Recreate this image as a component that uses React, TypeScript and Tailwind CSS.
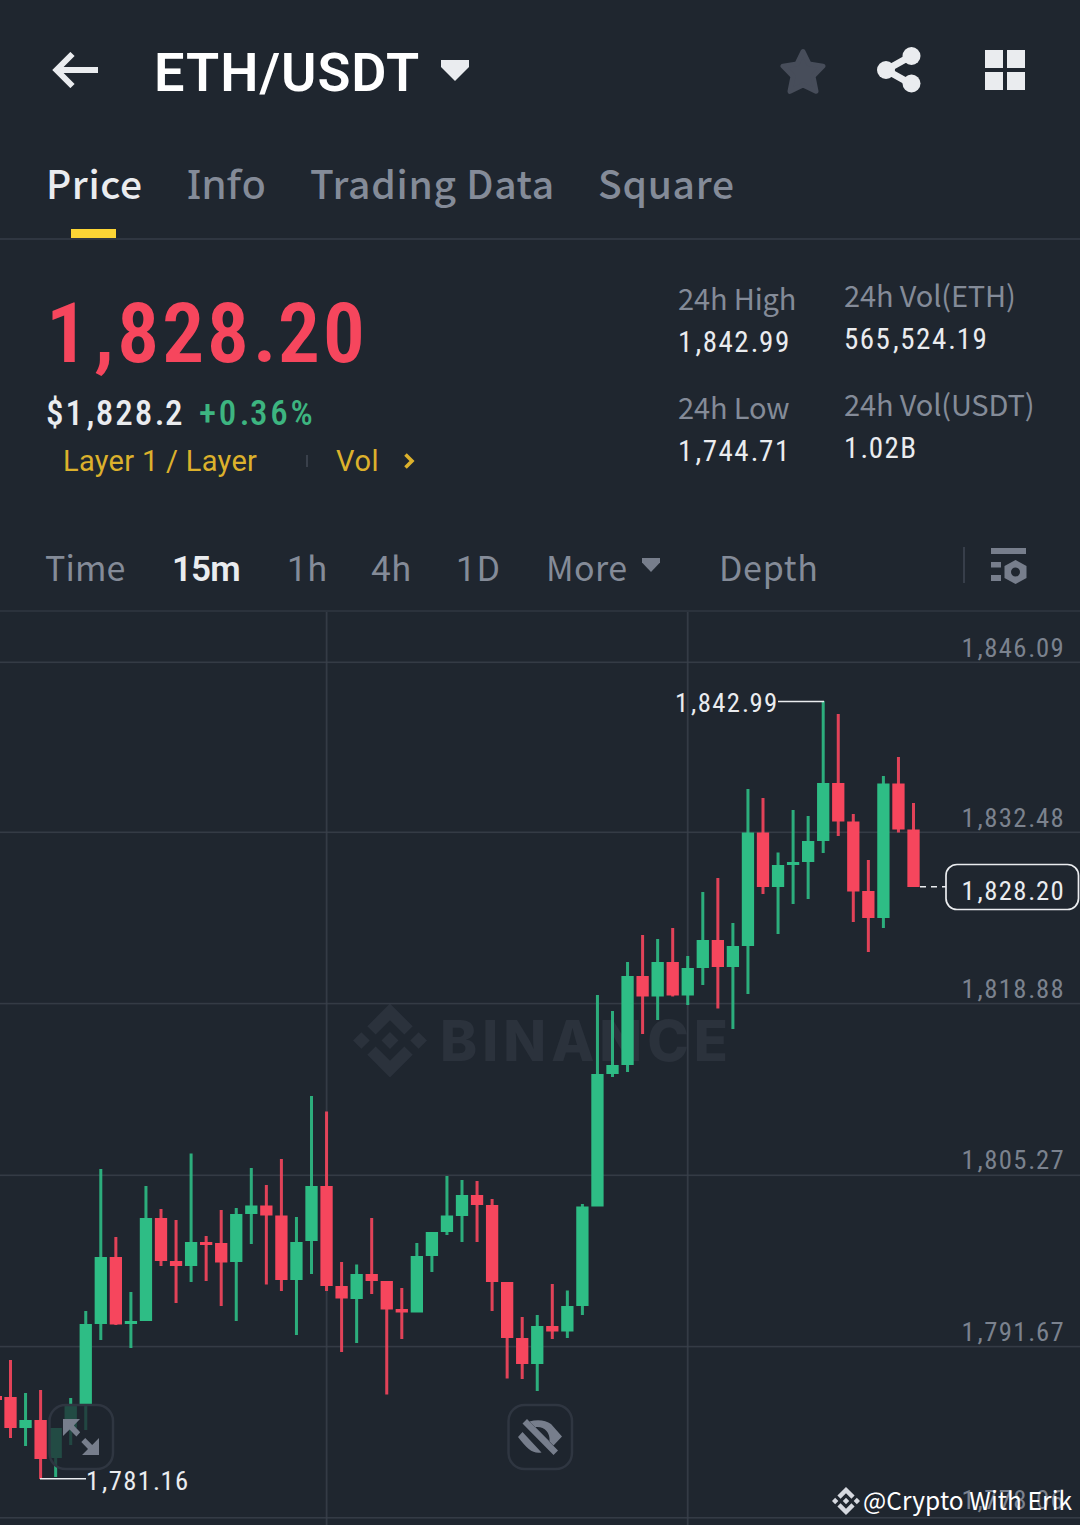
import type { ReactNode } from "react";

const UP = "#2ebd85";
const DOWN = "#f6465d";
const BG = "#1f262f";

/* [bodyTop, bodyBottom, wickTop, wickBottom, rising] in chart pixels */
type Candle = [number, number, number, number, 0 | 1];
const candles: Candle[] = [
  [1397, 1428, 1360, 1438, 0],
  [1420, 1428, 1393, 1446, 1],
  [1420, 1459, 1390, 1479, 0],
  [1428, 1458, 1428, 1477, 1],
  [1405, 1428, 1398, 1445, 1],
  [1324, 1404, 1311, 1430, 1],
  [1257, 1324, 1169, 1340, 1],
  [1257, 1324.5, 1237, 1325, 0],
  [1321, 1324, 1292, 1348, 1],
  [1218, 1321, 1186, 1321, 1],
  [1218, 1261, 1209, 1266, 0],
  [1261, 1266, 1220, 1303, 0],
  [1242, 1266, 1153.5, 1282, 1],
  [1242, 1245, 1236, 1281, 0],
  [1243, 1262.5, 1210, 1306, 0],
  [1214, 1262, 1208, 1321, 1],
  [1205.5, 1214, 1168, 1244, 1],
  [1205.5, 1215.5, 1185, 1284.5, 0],
  [1215.5, 1280, 1159, 1291, 0],
  [1242, 1280, 1217, 1335, 1],
  [1186, 1241, 1096, 1274, 1],
  [1186, 1286, 1111.5, 1291, 0],
  [1286, 1298.5, 1262, 1352, 0],
  [1274, 1299, 1264.5, 1343, 1],
  [1274, 1281, 1218, 1294, 0],
  [1281, 1309.5, 1281, 1394.5, 0],
  [1309, 1312.5, 1288, 1339, 0],
  [1256, 1312.5, 1243, 1312, 1],
  [1232, 1256, 1232, 1272, 1],
  [1215.5, 1232, 1176, 1235, 1],
  [1195, 1216, 1180, 1242, 1],
  [1195, 1205, 1181, 1242, 0],
  [1205, 1282, 1199, 1311, 0],
  [1282, 1338, 1282, 1378.5, 0],
  [1338, 1364, 1317, 1379, 0],
  [1326, 1364, 1315, 1391, 1],
  [1326, 1331.5, 1284, 1339, 0],
  [1306, 1331.5, 1290.5, 1338, 1],
  [1206.5, 1306, 1204, 1315, 1],
  [1074, 1206.5, 995, 1206, 1],
  [1065, 1074, 1011, 1077, 1],
  [976, 1065, 962, 1072, 1],
  [976, 996.5, 935, 1034, 0],
  [962, 996.5, 939, 1020, 1],
  [962, 995.5, 928, 996.5, 0],
  [968, 995.5, 956, 1005, 1],
  [940, 968, 892, 985, 1],
  [940, 967, 878, 1008.5, 0],
  [946, 967, 923, 1029, 1],
  [832.5, 946, 789, 994, 1],
  [832.5, 887, 798, 894, 0],
  [865, 887, 852.5, 934, 1],
  [862, 865, 810, 904, 1],
  [841, 862, 816, 899, 1],
  [783, 841, 701, 853, 1],
  [783, 821.5, 714, 836, 0],
  [821.5, 891.5, 814, 922, 0],
  [891, 918, 860, 952, 0],
  [783.5, 918, 776, 928, 1],
  [783.5, 829.5, 757, 832.5, 0],
  [829.5, 887, 803, 887, 0],
];

/* Number set in narrow figures with wide separators */
function Num({ value, className = "" }: { value: string; className?: string }) {
  return (
    <span className={`whitespace-nowrap font-['Roboto_Condensed','Roboto',sans-serif] tracking-[0.05em] ${className}`}>
      {value.split("").map((c, i) =>
        c === "," || c === "." ? (
          <span key={i} className="inline-block w-[0.31em] text-center tracking-normal">
            {c}
          </span>
        ) : (
          c
        ),
      )}
    </span>
  );
}

function BinanceMark({ x, y, size, fill }: { x: number; y: number; size: number; fill: string }) {
  return (
    <svg x={x} y={y} width={size} height={size} viewBox="0 0 126.61 126.61" fill={fill}>
      <path d="M38.73 53.2 63.3 28.63 87.89 53.22 102.19 38.92 63.3 0 24.43 38.9ZM0 63.31 14.3 49.01 28.6 63.31 14.3 77.61ZM38.73 73.41 63.3 98 87.89 73.39 102.2 87.68 63.3 126.61 24.41 87.72ZM98 63.31l14.3-14.3 14.3 14.3-14.3 14.3ZM77.83 63.3 63.3 48.78 48.78 63.3 63.3 77.83Z" />
    </svg>
  );
}

function Header() {
  return (
    <header className="flex h-[142px] items-center pb-0.5">
      <svg className="ml-[52px] h-9 w-[46px] shrink-0" viewBox="0 0 46 36" fill="none" stroke="#eaecef" strokeWidth="6">
        <path d="M20.5 2 4.5 18l16 16M5 18h41" />
      </svg>
      <h1 className="ml-[56px] mt-[5px] w-[287px] whitespace-nowrap font-['Roboto',sans-serif] text-[54px] font-semibold leading-none tracking-[1px] text-white">
        ETH/USDT
      </h1>
      <svg className="h-[21px] w-7 shrink-0" viewBox="0 0 28 21" fill="#eaecef">
        <path d="M0 0h28v7L14 21 0 7Z" />
      </svg>
      <svg className="ml-[311px] mt-px h-[46px] w-[46px] shrink-0" viewBox="0 0 46 46" fill="#474d5a" stroke="#474d5a" strokeWidth="5" strokeLinejoin="round">
        <path d="m23 3.5 6 12.4 14 2.2-10 10.2 3 15L23 37 10 43.300l3-15L3 18.100l14-2.200Z" />
      </svg>
      <svg className="ml-[51px] h-[46px] w-11 shrink-0" viewBox="0 0 44 46" fill="#eaecef">
        <path d="M9 23 35 8.500M9 23l26 14.500" stroke="#eaecef" strokeWidth="7" />
        <circle cx="9" cy="23" r="9" />
        <circle cx="34.500" cy="9" r="9" />
        <circle cx="34.500" cy="36.500" r="9" />
      </svg>
      <div className="ml-[64px] grid h-10 w-10 shrink-0 grid-cols-2 gap-1">
        <i className="bg-[#eaecef]" />
        <i className="bg-[#eaecef]" />
        <i className="bg-[#eaecef]" />
        <i className="bg-[#eaecef]" />
      </div>
    </header>
  );
}

function Tabs() {
  return (
    <nav className="flex h-[98px] items-baseline border-b-2 border-[#2f3641] pl-[46px] font-['Noto_Sans_CJK_SC',sans-serif] text-[39px] font-medium leading-[80px] text-[#848b98]">
      <a className="relative w-[141px] tracking-[0.6px] text-[#eaecef]">
        Price
        <i className="absolute left-[25px] top-[87px] h-[9px] w-[45px] bg-[#fcd535]" />
      </a>
      <a className="w-[123px] font-['Noto_Sans',sans-serif] text-[40px] tracking-[0.3px]">Info</a>
      <a className="w-[288px] whitespace-nowrap tracking-[0.7px]">Trading Data</a>
      <a className="tracking-[0.7px]">Square</a>
    </nav>
  );
}

function Stat({ label, children, className = "" }: { label: string; children: ReactNode; className?: string }) {
  return (
    <div className={`leading-9 ${className}`}>
      <div className="whitespace-nowrap font-['Noto_Sans_CJK_SC',sans-serif] text-[29px] tracking-[-0.15px] text-[#848b98]">{label}</div>
      <div className="mt-2 text-[29px] text-[#eaecef]">{children}</div>
    </div>
  );
}

function Summary() {
  return (
    <section className="flex h-[280px]">
      <div className="w-[678px] pl-[46px] pt-[52px]">
        <Num value="1,828.20" className="block text-[84px] font-semibold leading-[84px] tracking-[0.032em]! text-[#f6465d]" />
        <div className="mt-[18px] flex text-[35px] font-medium leading-10">
          <Num value="$1,828.2" className="w-[153px] tracking-[0.056em]! text-[#eaecef]" />
          <Num value="+0.36%" className="tracking-[0.08em]! text-[#3db580]" />
        </div>
        <div className="mt-[7px] flex items-center font-['Roboto',sans-serif] text-[29px] leading-10 text-[#dcb12c]">
          <span className="ml-[17px] w-[243px] whitespace-nowrap tracking-[0.3px]">Layer 1 / Layer</span>
          <i className="h-3 w-[2px] bg-[#39404b]" />
          <span className="ml-[28px] tracking-[0.6px]">Vol</span>
          <svg className="ml-[25px] h-4 w-[11px]" viewBox="0 0 11 16" fill="none" stroke="#dcb12c" strokeWidth="3.600">
            <path d="m1.500 1.500 6.500 6.500-6.500 6.500" />
          </svg>
        </div>
      </div>
      <div className="w-[166px] pt-[39px]">
        <Stat label="24h High">
          <Num value="1,842.99" />
        </Stat>
        <Stat label="24h Low" className="mt-7">
          <Num value="1,744.71" />
        </Stat>
      </div>
      <div className="pt-9">
        <Stat label="24h Vol(ETH)">
          <Num value="565,524.19" />
        </Stat>
        <Stat label="24h Vol(USDT)" className="mt-7">
          <Num value="1.02B" />
        </Stat>
      </div>
    </section>
  );
}

function Intervals() {
  return (
    <div className="flex h-[92px] items-baseline border-b-2 border-[#2b323c] pl-[45px] font-['Noto_Sans_CJK_SC',sans-serif] text-[34px] leading-[94px] text-[#848b98]">
      <span className="w-[127px] tracking-[0.1px]">Time</span>
      <span className="w-[115px] font-['Roboto',sans-serif] text-[35px] font-semibold tracking-[-0.9px] text-[#eaecef]">15m</span>
      <span className="w-[84px] font-['Roboto',sans-serif] text-[35px] tracking-[1px]">1h</span>
      <span className="w-[85px] font-['Roboto',sans-serif] text-[35px] tracking-[1px]">4h</span>
      <span className="w-[90px] font-['Roboto',sans-serif] text-[35px] tracking-[1.4px]">1D</span>
      <span className="w-[96px] tracking-[0.4px]">More</span>
      <svg className="h-[14px] w-[18px] shrink-0 -translate-y-[9px]" viewBox="0 0 18 14" fill="#777e8c">
        <path d="M0 0h18v4.500L9 14 0 4.500Z" />
      </svg>
      <span className="ml-[59px] w-[244px] tracking-[0.7px]">Depth</span>
      <i className="h-9 w-[2px] self-center bg-[#373e4a]" />
      <svg className="ml-[26px] mt-0.5 h-9 w-9 self-center" viewBox="0 0 36 36" fill="#777e8c">
        <path d="M0 0h35v6H0ZM0 14h10v5.500H0ZM0 27h10v6H0Z" />
        <path fillRule="evenodd" d="m24.500 12 11 6v12l-11 6-11-6V18Zm0 7.500a4.500 4.500 0 1 0 0 9 4.500 4.500 0 0 0 0-9Z" />
      </svg>
    </div>
  );
}

function Chart() {
  return (
    <section className="relative h-[913px] overflow-hidden">
      <svg className="block h-[913px] w-[1080px]" viewBox="0 612 1080 913">
        <BinanceMark x={353} y={1003.5} size={74} fill="#2b323c" />
        <text x="440" y="1061" textLength="288" fontFamily="Inter, sans-serif" fontWeight="800" fontSize="56" fill="#2b323c">
          BINANCE
        </text>
        <g fill="#39414b" fillOpacity="0.800">
          {[661.5, 831.5, 1002.8, 1174.5, 1345.8, 1517].map((y) => (
            <rect key={y} x="0" y={y} width="1080" height="1.600" />
          ))}
          <rect x="325.700" y="612" width="1.800" height="913" />
          <rect x="686.800" y="612" width="1.800" height="913" />
        </g>
        <rect x="0" y="1396" width="2" height="4" fill={DOWN} />
        {candles.map(([top, bottom, high, low, up], i) => {
          const x = 10.5 + i * 15.05;
          return (
            <g key={i} fill={up ? UP : DOWN}>
              <rect x={x - 1.5} y={high} width="3" height={low - high} fillOpacity="0.900" />
              <rect x={x - 6.15} y={top} width="12.300" height={bottom - top} />
            </g>
          );
        })}
        <path d="M778 701.500h46M40 1478.800h46" stroke="#eaecef" strokeWidth="1.600" />
        <path d="M920 886.700h26" stroke="#eaecef" strokeWidth="1.600" strokeDasharray="6 5" />
        <rect x="946" y="864.500" width="132.500" height="45" rx="11" fill={BG} stroke="#eaecef" strokeWidth="1.700" />

        <g fill={BG} fillOpacity="0.750" stroke="#2f3641" strokeWidth="2.500">
          <rect x="49.500" y="1405" width="63.500" height="64" rx="16" />
          <rect x="508.500" y="1405" width="63.500" height="64" rx="16" />
        </g>
        <g fill="#777e8c">
          <path d="M63 1419h17l-6.200 6.500 6.400 6.700-3.800 4.200-6.800-6.900-6.600 6.500ZM99 1455H82l6-6-6.700-7 3.900-4 7 7 6.800-7Z" />
          <path fillRule="evenodd" d="M529.500 1421.500C537 1419 546 1420 551 1424L562 1436.500 553.500 1445.500ZM534 1427.500 547 1441.500 549.500 1441.500C550.500 1431.500 543 1425.500 534 1427.500Z" />
          <path d="M527 1419 558 1450.500 553.500 1455 522.500 1423.500ZM522.500 1432 541.500 1452.500C533 1454 527.500 1449.500 518 1437Z" />
        </g>
      </svg>

      <div className="absolute right-[15px] top-[21px] flex flex-col text-[26.7px] leading-[30px] text-[#7b828e]">
        <Num value="1,846.09" />
        <Num value="1,832.48" className="mt-[140px]" />
        <Num value="1,818.88" className="mt-[141px]" />
        <Num value="1,805.27" className="mt-[141px]" />
        <Num value="1,791.67" className="mt-[142px]" />
        <Num value="1,778.06" className="mt-[138px]" />
      </div>
      <Num value="1,842.99" className="absolute left-[675px] top-[76px] text-[26.7px] leading-[30px] text-[#eaecef]" />
      <Num value="1,828.20" className="absolute right-[15px] top-[264px] text-[26.7px] leading-[30px] text-[#eaecef]" />
      <Num value="1,781.16" className="absolute left-[86px] top-[854px] text-[26.7px] leading-[30px] text-[#eaecef]" />

      <svg className="absolute left-[832px] top-[868px] h-[45px] w-[248px]" viewBox="832 1480 248 45">
        <BinanceMark x={832} y={1487} size={28} fill="#d5d8df" />
        <text x="863" y="1510" textLength="209" fontFamily="'Noto Sans CJK SC', sans-serif" fontSize="24.500" fill="#ffffff">
          @Crypto With Erik
        </text>
      </svg>
    </section>
  );
}

export default function App() {
  return (
    <main className="h-[1525px] w-[1080px] overflow-hidden bg-[#1f262f]">
      <Header />
      <Tabs />
      <Summary />
      <Intervals />
      <Chart />
    </main>
  );
}
